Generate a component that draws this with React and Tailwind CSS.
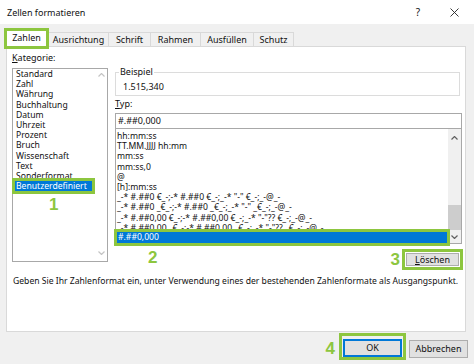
import React from 'react'

const categories = [
  'Standard',
  'Zahl',
  'Währung',
  'Buchhaltung',
  'Datum',
  'Uhrzeit',
  'Prozent',
  'Bruch',
  'Wissenschaft',
  'Text',
  'Sonderformat',
]

const formats = [
  'hh:mm:ss',
  'TT.MM.JJJJ hh:mm',
  'mm:ss',
  'mm:ss,0',
  '@',
  '[h]:mm:ss',
  '_-* #.##0 €_-;-* #.##0 €_-;_-* "-" €_-;_-@_-',
  '_-* #.##0 _€_-;-* #.##0 _€_-;_-* "-" _€_-;_-@_-',
  '_-* #.##0,00 €_-;-* #.##0,00 €_-;_-* "-"?? €_-;_-@_-',
  '_-* #.##0,00 _€_-;-* #.##0,00 _€_-;_-* "-"?? _€_-;_-@_-',
]

const Chevron = ({ down, color }) => (
  <svg width="7" height="4" viewBox="0 0 7 4" fill="none" stroke={color} strokeWidth="1.2">
    <path d={down ? 'M0.5 0.5L3.5 3.5L6.5 0.5' : 'M0.5 3.5L3.5 0.5L6.5 3.5'} />
  </svg>
)

const Digit = ({ children, className = '' }) => (
  <span className={`font-['Liberation_Sans',Arial,sans-serif] font-bold text-[17px] leading-[17px] text-[#8dc63f] ${className}`}>
    {children}
  </span>
)

const App = () => {
  return (
    <div className="w-[474px] h-[364px] bg-[#f0f0f0] flex flex-col overflow-hidden text-[#111] font-['Noto_Sans',sans-serif] text-[9px]">
      {/* title bar */}
      <div className="h-[24px] bg-white flex items-center pl-[7px] shrink-0">
        <span className="flex-1 text-[9px] pt-[2px]">Zellen formatieren</span>
        <span className="text-[10px] w-[8px] text-center mr-[28px]">?</span>
        <svg width="9" height="9" viewBox="0 0 9 9" stroke="#222" strokeWidth="0.9" className="mr-[15px]">
          <path d="M0.5 0.5L8.5 8.5M8.5 0.5L0.5 8.5" />
        </svg>
      </div>

      <div className="flex-1 px-[6px] flex flex-col">
        {/* tabs */}
        <div className="flex items-end pt-[4px] -ml-[2px]">
          <div className="relative z-10 w-[45px] h-[21px] -mb-[3px] border-[3px] border-[#8dc63f] bg-white flex items-center justify-center pb-[2px]">
            Zahlen
          </div>
          <div className="w-[60px] h-[14px] border-t border-r border-[#d9d9d9] flex items-center justify-center">Ausrichtung</div>
          <div className="w-[42px] h-[14px] border-t border-r border-[#d9d9d9] flex items-center justify-center">Schrift</div>
          <div className="w-[50px] h-[14px] border-t border-r border-[#d9d9d9] flex items-center justify-center">Rahmen</div>
          <div className="w-[53px] h-[14px] border-t border-r border-[#d9d9d9] flex items-center justify-center">Ausfüllen</div>
          <div className="w-[40px] h-[14px] border-t border-r border-[#d9d9d9] flex items-center justify-center">Schutz</div>
        </div>

        {/* tab panel */}
        <div className="w-[460px] h-[286px] bg-white border border-[#d9d9d9] flex flex-col pt-[4px] pl-[5px] shrink-0">
          <div className="flex items-start gap-[7px]">
            {/* Kategorie */}
            <div className="w-[96px] flex flex-col">
              <div className="h-[14px] leading-[14px]">
                <u>K</u>ategorie:
              </div>
              <div className="mt-[3px] h-[194px] border border-[#a8a8a8] flex text-[8.6px]">
                <div className="flex-1 flex flex-col">
                  {categories.map((c) => (
                    <div key={c} className="h-[10.2px] leading-[10.2px] pl-[3px] whitespace-nowrap">
                      {c}
                    </div>
                  ))}
                  <div className="relative z-10 ml-[2px] w-[77px] h-[10.2px] leading-[10.2px] pl-[1px] bg-[#0078d7] text-white outline-[3px] outline-solid outline-[#8dc63f] whitespace-nowrap">
                    Benutzerdefiniert
                  </div>
                  <Digit className="mt-[5px] pl-[36px]">1</Digit>
                </div>
                <div className="w-[12px] flex flex-col items-center justify-between pt-[4px] pb-[6px]">
                  <Chevron color="#c4c4c4" />
                  <Chevron down color="#c4c4c4" />
                </div>
              </div>
            </div>

            {/* rechte Seite */}
            <div className="w-[347px] flex flex-col">
              <div className="relative mt-[21px] w-[345px] h-[24px] border border-[#dcdcdc] pl-[7px] pt-[7px] leading-[14px]">
                <span className="absolute -top-[8px] left-[3px] bg-white px-[1px] leading-[14px]">Beispiel</span>
                1.515,340
              </div>
              <div className="mt-[1px] h-[14px] leading-[14px]">
                <u>T</u>yp:
              </div>
              <div className="mt-[2px] h-[16px] border border-[#a8a8a8] pl-[2px] leading-[14px]">#.##0,000</div>
              <div className="h-[115px] border border-t-0 border-[#a8a8a8] flex">
                <div className="flex-1 flex flex-col min-w-0">
                  <div className="flex-1 overflow-hidden pt-[2px] text-[8.6px]">
                    {formats.map((f) => (
                      <div key={f} className="h-[10.2px] leading-[10.2px] pl-[1px] whitespace-pre">
                        {f}
                      </div>
                    ))}
                  </div>
                  <div className="relative z-10 mx-[1px] h-[11px] leading-[11px] pl-[1px] text-[8.6px] bg-[#0078d7] text-white outline-[3px] outline-solid outline-[#8dc63f]">
                    #.##0,000
                  </div>
                </div>
                <div className="w-[13px] bg-[#f0f0f0] flex flex-col items-center">
                  <div className="h-[17px] flex items-center">
                    <Chevron color="#606060" />
                  </div>
                  <div className="flex-1" />
                  <div className="w-[13px] h-[25px] bg-[#cdcdcd]" />
                  <div className="h-[13px] flex items-center">
                    <Chevron down color="#606060" />
                  </div>
                </div>
              </div>
              <div className="mt-[5px] flex items-start">
                <Digit className="ml-[33px]">2</Digit>
                <div className="flex-1" />
                <Digit className="mt-[2px] mr-[2px]">3</Digit>
                <div className="w-[61px] h-[21px] -mr-[1px] border-[3px] border-[#8dc63f] flex items-center justify-center p-[1px]">
                  <div className="w-full h-full bg-[#e1e1e1] border border-[#adadad] flex items-center justify-center">
                    <span>
                      <u>L</u>öschen
                    </span>
                  </div>
                </div>
              </div>
            </div>
          </div>

          <div className="mt-[4px] ml-[1px] h-[14px] leading-[14px] whitespace-nowrap text-[8.6px]">
            Geben Sie Ihr Zahlenformat ein, unter Verwendung eines der bestehenden Zahlenformate als Ausgangspunkt.
          </div>
        </div>

        {/* buttons */}
        <div className="flex items-start justify-end pt-[1px]">
          <Digit className="mt-[7px] mr-[4px]">4</Digit>
          <div className="w-[67px] h-[27px] border-[3px] border-[#8dc63f] flex items-end justify-center">
            <div className="w-[59px] h-[18px] bg-[#e1e1e1] border-2 border-[#0078d7] flex items-center justify-center">OK</div>
          </div>
          <div className="ml-[3px] mt-[7px] w-[59px] h-[18px] bg-[#e1e1e1] border border-[#adadad] flex items-center justify-center">
            Abbrechen
          </div>
        </div>
      </div>
    </div>
  )
}

export default App
